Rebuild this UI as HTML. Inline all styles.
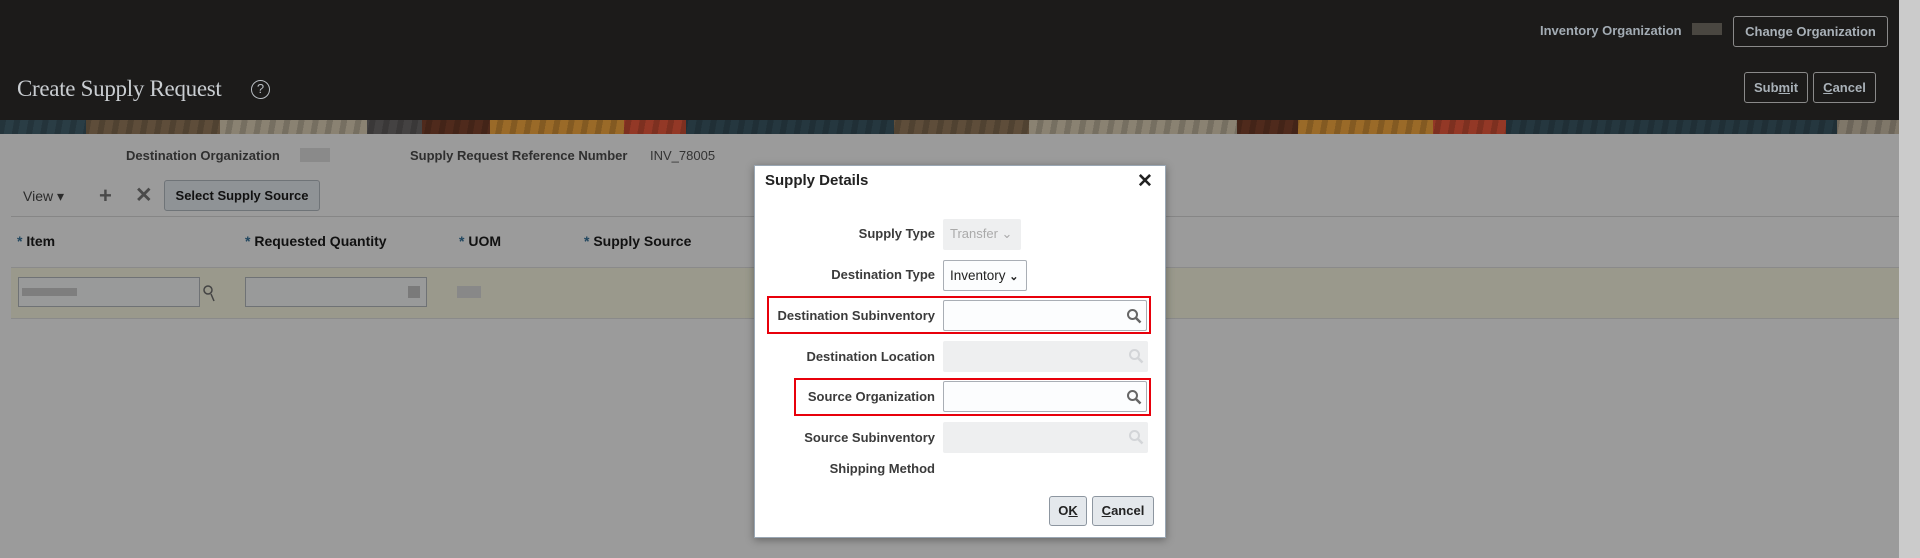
<!DOCTYPE html>
<html><head><meta charset="utf-8"><style>
*{box-sizing:border-box;margin:0;padding:0}
body{width:1920px;height:558px;overflow:hidden;background:#9b9b9b;font-family:"Liberation Sans",Arial,sans-serif;position:relative}
.abs{position:absolute}
#hdr{left:0;top:0;width:1899px;height:120px;background:#1c1b1a}
#banner{left:0;top:120px;width:1899px;height:14px;background:linear-gradient(90deg,#2a3d45 0,#2a3d45 86px,#5e4d3a 86px,#5e4d3a 220px,#8a8272 220px,#8a8272 367px,#444242 367px,#444242 422px,#4f2a1c 422px,#4f2a1c 490px,#9a6a28 490px,#9a6a28 624px,#933826 624px,#933826 686px,#25373f 686px,#25373f 894px,#5e4d3a 894px,#5e4d3a 1029px,#8a8272 1029px,#8a8272 1237px,#4f2a1c 1237px,#4f2a1c 1298px,#9a6a28 1298px,#9a6a28 1433px,#933826 1433px,#933826 1506px,#25373f 1506px,#25373f 1837px,#7f7769 1837px,#7f7769 1899px)}
#banner:after{content:"";position:absolute;inset:0;background:repeating-linear-gradient(100deg,rgba(0,0,0,.15) 0 6px,rgba(255,255,255,0) 6px 14px)}
#sb{left:1899px;top:0;width:21px;height:558px;background:#cbcbcb}
.hb{border:1px solid #8a8a8a;border-radius:3px;color:#a9b1b8;font-size:13px;font-weight:bold;text-align:center}
.t{font-size:13px;color:#2b2b2b;white-space:nowrap}
.b{font-weight:bold}
.dl{font-size:13px;font-weight:bold;color:#3b3b3b;text-align:right;width:200px;white-space:nowrap}
.inp{border:1px solid #a9aeb5;background:#fcfdfe;border-radius:2px}
.dis{background:#eeeff0;border-radius:2px}
.mag{position:absolute;right:4px;top:7px}
</style></head><body>
<div class="abs" id="hdr"></div>
<div class="abs" id="banner"></div>
<div class="abs" id="sb"></div>
<div class="abs" style="left:1540px;top:23px;font-size:13px;font-weight:bold;color:#a3acb4">Inventory Organization</div>
<div class="abs" style="left:1692px;top:23px;width:30px;height:12px;background:#4a4741"></div>
<div class="abs hb" style="left:1733px;top:16px;width:155px;height:31px;line-height:29px">Change Organization</div>
<div class="abs hb" style="left:1744px;top:72px;width:64px;height:31px;line-height:29px">Sub<u>m</u>it</div>
<div class="abs hb" style="left:1813px;top:72px;width:63px;height:31px;line-height:29px"><u>C</u>ancel</div>
<div class="abs" style="left:17px;top:76px;font-family:'Liberation Serif',serif;font-size:23px;color:#c9cdd1;letter-spacing:-0.3px">Create Supply Request</div>
<div class="abs" style="left:251px;top:80px;width:19px;height:19px;border:1.5px solid #b9bec3;border-radius:50%;color:#b9bec3;font-size:13px;text-align:center;line-height:16px">?</div>

<div class="abs t b" style="left:126px;top:148px;color:#2f2f2f">Destination Organization</div>
<div class="abs" style="left:300px;top:148px;width:30px;height:14px;background:#8a8a8a"></div>
<div class="abs t b" style="left:410px;top:148px;color:#2f2f2f">Supply Request Reference Number</div>
<div class="abs t" style="left:650px;top:148px;color:#333">INV_78005</div>
<div class="abs t" style="left:23px;top:188px;font-size:14px">View ▾</div>
<div class="abs" style="left:99px;top:185px;font-size:22px;font-weight:bold;color:#4a4a4a;line-height:22px">+</div>
<div class="abs" style="left:135px;top:185px;font-size:21px;font-weight:bold;color:#4a4a4a;line-height:22px">✕</div>
<div class="abs" style="left:164px;top:180px;width:156px;height:31px;border:1px solid #6f7478;border-radius:3px;background:#8f9396;font-size:13px;font-weight:bold;color:#111;text-align:center;line-height:29px">Select Supply Source</div>
<div class="abs" style="left:11px;top:216px;width:1888px;height:1px;background:#868686"></div>
<div class="abs t b" style="left:17px;top:233px;font-size:14px;color:#111"><span style="color:#20465f">*</span> Item</div>
<div class="abs t b" style="left:245px;top:233px;font-size:14px;color:#111"><span style="color:#20465f">*</span> Requested Quantity</div>
<div class="abs t b" style="left:459px;top:233px;font-size:14px;color:#111"><span style="color:#20465f">*</span> UOM</div>
<div class="abs t b" style="left:584px;top:233px;font-size:14px;color:#111"><span style="color:#20465f">*</span> Supply Source</div>
<div class="abs" style="left:11px;top:267px;width:1888px;height:52px;background:#9a998c;border-top:1px solid #8a8a8a;border-bottom:1px solid #8a8a8a"></div>
<div class="abs" style="left:18px;top:277px;width:182px;height:30px;border:1px solid #6f7275;background:#999a9a"></div>
<div class="abs" style="left:22px;top:288px;width:55px;height:8px;background:#7e7e7e"></div>
<svg class="abs" style="left:203px;top:284px" width="14" height="20"><circle cx="5" cy="6" r="4" fill="none" stroke="#444" stroke-width="1.5"/><line x1="8" y1="10" x2="11" y2="17" stroke="#444" stroke-width="1.5"/></svg>
<div class="abs" style="left:245px;top:277px;width:182px;height:30px;border:1px solid #6f7275;background:#999a9a"></div>
<div class="abs" style="left:408px;top:286px;width:12px;height:12px;background:#7a7a7a"></div>
<div class="abs" style="left:457px;top:286px;width:24px;height:12px;background:#888"></div>

<div class="abs" style="left:754px;top:165px;width:412px;height:373px;background:#fff;border:1px solid #9aa7b4;box-shadow:0 2px 8px rgba(0,0,0,.35)"></div>
<div class="abs" style="left:765px;top:172px;font-size:15px;font-weight:bold;color:#222">Supply Details</div>
<div class="abs" style="left:1137px;top:170px;font-size:19px;font-weight:bold;color:#222">✕</div>
<div class="abs dl" style="left:735px;top:226px">Supply Type</div>
<div class="abs dis" style="left:943px;top:219px;width:78px;height:31px;color:#aaa;font-size:13px;padding:7px 0 0 7px;overflow:hidden;white-space:nowrap">Transfer ⌄</div>
<div class="abs dl" style="left:735px;top:267px">Destination Type</div>
<div class="abs inp" style="left:943px;top:260px;width:84px;height:31px;font-size:13.5px;color:#222;padding:7px 0 0 6px;white-space:nowrap">Inventory <b style="font-size:11px">&#8964;</b></div>
<div class="abs" style="left:767px;top:296px;width:384px;height:38px;border:2px solid #e8000b"></div>
<div class="abs dl" style="left:735px;top:308px">Destination Subinventory</div>
<div class="abs inp" style="left:943px;top:300px;width:204px;height:31px"><svg class="mag" width="16" height="16"><circle cx="6.5" cy="6.5" r="4.5" fill="none" stroke="#666" stroke-width="2"/><line x1="10" y1="10" x2="14.5" y2="14.5" stroke="#666" stroke-width="2.5"/></svg></div>
<div class="abs dl" style="left:735px;top:349px">Destination Location</div>
<div class="abs dis" style="left:943px;top:341px;width:205px;height:31px"><svg class="mag" width="16" height="16"><circle cx="6.5" cy="6.5" r="4.5" fill="none" stroke="#d3d5d8" stroke-width="2"/><line x1="10" y1="10" x2="14.5" y2="14.5" stroke="#d3d5d8" stroke-width="2.5"/></svg></div>
<div class="abs" style="left:794px;top:378px;width:357px;height:38px;border:2px solid #e8000b"></div>
<div class="abs dl" style="left:735px;top:389px">Source Organization</div>
<div class="abs inp" style="left:943px;top:381px;width:204px;height:31px"><svg class="mag" width="16" height="16"><circle cx="6.5" cy="6.5" r="4.5" fill="none" stroke="#666" stroke-width="2"/><line x1="10" y1="10" x2="14.5" y2="14.5" stroke="#666" stroke-width="2.5"/></svg></div>
<div class="abs dl" style="left:735px;top:430px">Source Subinventory</div>
<div class="abs dis" style="left:943px;top:422px;width:205px;height:31px"><svg class="mag" width="16" height="16"><circle cx="6.5" cy="6.5" r="4.5" fill="none" stroke="#d3d5d8" stroke-width="2"/><line x1="10" y1="10" x2="14.5" y2="14.5" stroke="#d3d5d8" stroke-width="2.5"/></svg></div>
<div class="abs dl" style="left:735px;top:461px">Shipping Method</div>
<div class="abs" style="left:1049px;top:496px;width:38px;height:30px;border:1px solid #8d96a0;border-radius:3px;background:#e4e8ec;font-size:13px;font-weight:bold;color:#222;text-align:center;line-height:28px">O<u>K</u></div>
<div class="abs" style="left:1092px;top:496px;width:62px;height:30px;border:1px solid #8d96a0;border-radius:3px;background:#e4e8ec;font-size:13px;font-weight:bold;color:#222;text-align:center;line-height:28px"><u>C</u>ancel</div>
</body></html>
